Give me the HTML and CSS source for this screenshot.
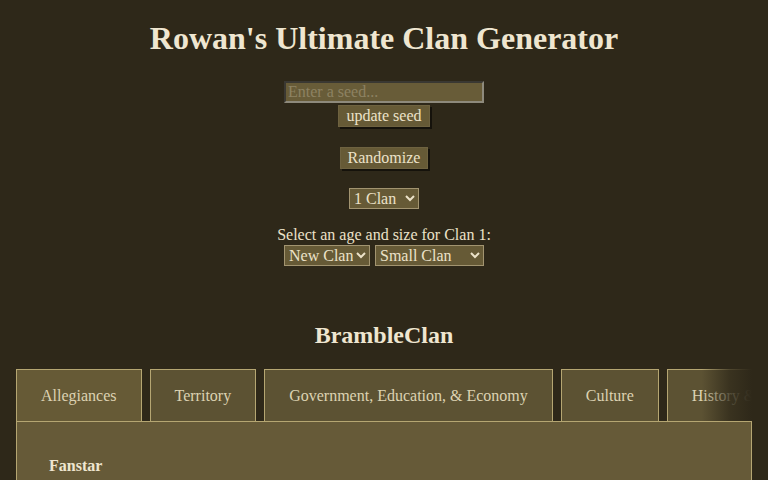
FILE: index.html
```html
<!DOCTYPE html>
<html lang="en">
<head>
<meta charset="utf-8">
<title>Rowan's Ultimate Clan Generator</title>
<link rel="stylesheet" href="styles.css">
</head>
<body>
<header class="page-head">
  <h1 class="title">Rowan's Ultimate Clan Generator</h1>
</header>

<section class="controls">
  <input class="seed-input" type="text" placeholder="Enter a seed...">
  <button class="btn btn-update" type="button">update seed</button>
  <button class="btn btn-random" type="button">Randomize</button>
  <select class="pick pick-count">
    <option>1 Clan</option>
    <option>2 Clans</option>
    <option>3 Clans</option>
  </select>
  <p class="prompt">Select an age and size for Clan 1:</p>
  <div class="pick-row">
    <select class="pick">
      <option>New Clan</option>
      <option>Old Clan</option>
    </select>
    <select class="pick pick-size">
      <option>Small Clan</option>
      <option>Large Clan</option>
    </select>
  </div>
</section>

<section class="clan">
  <h2 class="clan-name">BrambleClan</h2>
  <div class="tab-wrap">
    <nav class="tabs">
      <span class="tab active">Allegiances</span>
      <span class="tab">Territory</span>
      <span class="tab">Government, Education, &amp; Economy</span>
      <span class="tab">Culture</span>
      <span class="tab">History &amp; Lore</span>
    </nav>
    <div class="tab-fade"></div>
  </div>
  <div class="panel">
    <h3 class="rank">Fanstar</h3>
  </div>
</section>
</body>
</html>
```
FILE: styles.css
```css
html, body {
  margin: 0;
  padding: 0;
}

body {
  background: #2e2819;
  color: #ece2c9;
  font-family: "Liberation Serif", "Times New Roman", serif;
  font-size: 16px;
  overflow: hidden;
}

.title {
  margin: 20px 0 24px;
  text-align: center;
  font-size: 32px;
  font-weight: bold;
  color: #efe6d0;
  line-height: 37px;
}

.controls {
  display: flex;
  flex-direction: column;
  align-items: center;
}

.seed-input {
  box-sizing: border-box;
  width: 200px;
  height: 22px;
  margin: 0;
  padding: 1px 2px;
  background: #685c38;
  color: #ece2c9;
  border: 2px inset #8e8a7c;
  font-family: inherit;
  font-size: 16px;
}

.seed-input::placeholder {
  color: #8d8262;
}

.btn {
  box-sizing: border-box;
  height: 22px;
  padding: 0 7px;
  background: #665a36;
  color: #ece2c9;
  border: 1px solid #6e6240;
  box-shadow: 2px 2px 0 #15120b;
  font-family: inherit;
  font-size: 16px;
  line-height: 18px;
}

.btn-update {
  margin-top: 2px;
}

.btn-random {
  margin-top: 20px;
}

.pick {
  box-sizing: border-box;
  height: 21px;
  margin: 0;
  background: #665a36;
  color: #ece2c9;
  border: 1px solid #a29470;
  border-radius: 0;
  font-family: inherit;
  font-size: 16px;
}

.pick-count {
  margin-top: 19px;
  width: 70px;
}

.prompt {
  margin: 17px 0 1px;
  line-height: 18px;
}

.pick-row {
  display: flex;
  gap: 5px;
}

.pick-row .pick {
  width: 86px;
}

.pick-row .pick-size {
  width: 109px;
}

.clan {
  padding: 0 16px;
}

.clan-name {
  margin: 55px 0 20px;
  text-align: center;
  font-size: 24px;
  line-height: 28px;
  font-weight: bold;
  color: #efe6d0;
}

.tab-wrap {
  position: relative;
}

.tabs {
  display: flex;
  gap: 8px;
  overflow: hidden;
  white-space: nowrap;
}

.tab {
  flex-shrink: 0;
  padding: 16px 24px;
  line-height: 19px;
  background: #5c5233;
  color: #ddd2b2;
  border: 1px solid #b5a672;
  border-bottom: none;
}

.tab.active {
  background: #665a36;
  padding-bottom: 17px;
  margin-bottom: -1px;
  position: relative;
  z-index: 1;
}

.tab-fade {
  position: absolute;
  top: 0;
  right: 0;
  width: 56px;
  height: 100%;
  background: linear-gradient(to right, rgba(46, 40, 25, 0) 10%, rgba(46, 40, 25, 0.75) 60%, #2e2819 100%);
  z-index: 2;
}

.panel {
  background: #665a38;
  border: 1px solid #b5a672;
  padding: 29px 32px 40px;
  min-height: 200px;
}

.rank {
  margin: 0;
  font-size: 16px;
  font-weight: bold;
  line-height: 30px;
  color: #efe6d0;
}
```
